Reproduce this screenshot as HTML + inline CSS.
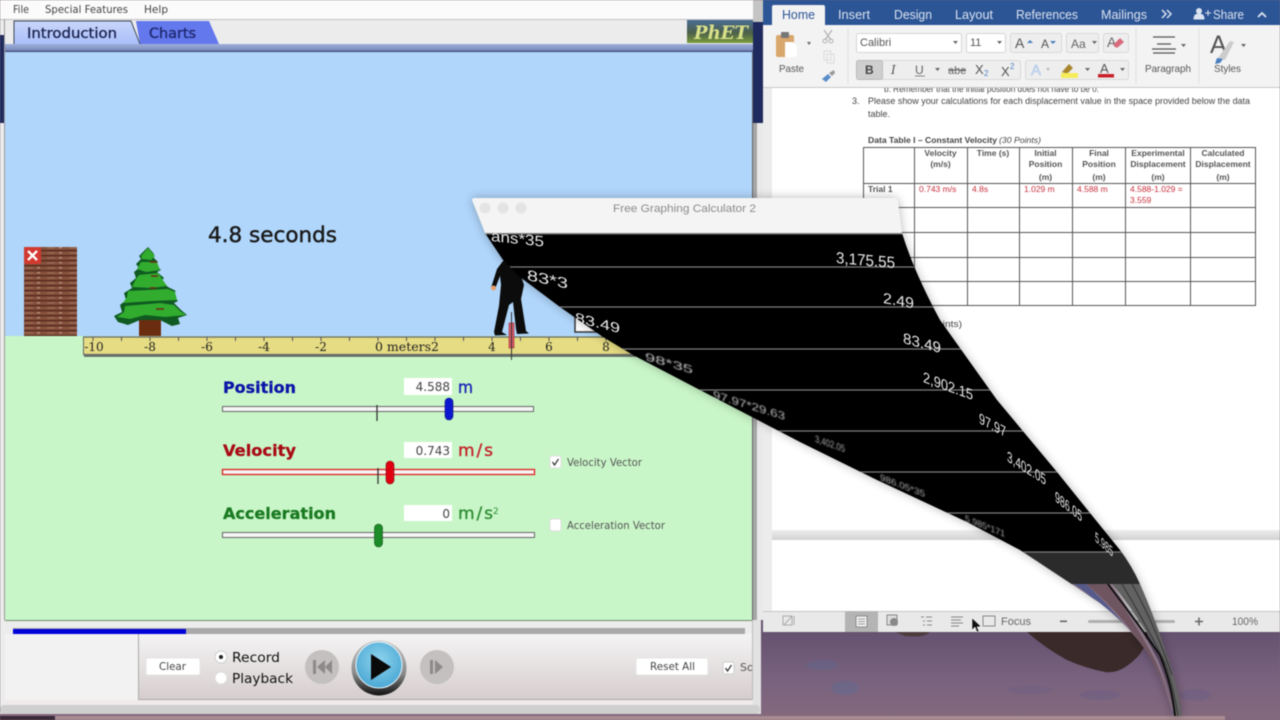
<!DOCTYPE html>
<html><head><meta charset="utf-8"><title>Screen</title>
<style>
html,body{margin:0;padding:0;width:1280px;height:720px;overflow:hidden;background:#7e6679}
svg{display:block;filter:blur(.45px)}
.d{font-family:"DejaVu Sans",sans-serif}
.l{font-family:"Liberation Sans",sans-serif}
.s{font-family:"DejaVu Serif",serif}
</style></head><body>
<svg width="1280" height="720" viewBox="0 0 1280 720" xmlns="http://www.w3.org/2000/svg">
<defs>
<linearGradient id="desk" gradientUnits="userSpaceOnUse" x1="0" y1="632" x2="0" y2="716"><stop offset="0" stop-color="#655270"/><stop offset=".55" stop-color="#78627e"/><stop offset="1" stop-color="#84697e"/></linearGradient>
<linearGradient id="panel" x1="0" y1="0" x2="0" y2="1"><stop offset="0" stop-color="#f4f4f4"/><stop offset="1" stop-color="#d6cdcd"/></linearGradient>
<linearGradient id="strip" x1="0" y1="0" x2="0" y2="1"><stop offset="0" stop-color="#9eb0dc"/><stop offset=".7" stop-color="#7f8fbf"/><stop offset="1" stop-color="#4b5a8c"/></linearGradient>
<linearGradient id="tab1" x1="0" y1="0" x2="0" y2="1"><stop offset="0" stop-color="#c8d6fa"/><stop offset="1" stop-color="#aabffa"/></linearGradient>
<linearGradient id="phet" x1="0" y1="0" x2="0" y2="1"><stop offset="0" stop-color="#4a6c96"/><stop offset=".55" stop-color="#4c5f4a"/><stop offset="1" stop-color="#7a9a3c"/></linearGradient>
<radialGradient id="playb" cx=".5" cy=".4" r=".6"><stop offset="0" stop-color="#8fd4ee"/><stop offset="1" stop-color="#4ba8d4"/></radialGradient>
<linearGradient id="playr" x1="0" y1="0" x2="0" y2="1"><stop offset="0" stop-color="#c8c8c8"/><stop offset=".6" stop-color="#8a8a8a"/><stop offset="1" stop-color="#111"/></linearGradient>
<linearGradient id="band" x1="0" y1="0" x2="0" y2="1"><stop offset="0" stop-color="#eeeeee"/><stop offset="1" stop-color="#d2d2d2"/></linearGradient>
<pattern id="brick" width="22" height="5" patternUnits="userSpaceOnUse"><rect width="22" height="5" fill="#85503c"/><rect y="0" width="22" height="1.300" fill="#55291c"/><rect x="3" y="2.300" width="8" height="1.200" fill="#9c6c54"/><rect x="15" y="2" width="3" height="1.500" fill="#b08a76"/></pattern>
<filter id="sh" x="-10%" y="-10%" width="120%" height="120%"><feGaussianBlur stdDeviation="5"/></filter>
<filter id="bl" x="-20%" y="-20%" width="140%" height="140%"><feGaussianBlur stdDeviation=".6"/></filter>
<clipPath id="docc"><rect x="772" y="88" width="508" height="442"/></clipPath>
<clipPath id="genie"><path id="gp" d="M472 200Q472 198 475 198L894 198Q897 198 898 201L902 233Q914 272 940 320L997 400L1057 472L1090 513L1120 550Q1132 566 1140 584Q1156 620 1172 670Q1180 696 1182 716L1173 716Q1168 690 1150 657Q1132 628 1100 603Q1085 593 1070 583L1020 550L967 522L877 480L800 442L700 390L633 355L603 337L560 307L520 277L503 260L485 233Z"/></clipPath>
</defs>

<!-- desktop -->
<rect width="1280" height="720" fill="url(#desk)"/>
<path d="M1027 632L1148 632Q1147 650 1132 662Q1118 674 1105 672Q1085 668 1067 660Q1045 648 1027 632Z" fill="#3a2a2a"/>
<path d="M895 632L930 632Q925 638 905 636Z" fill="#4d3c3e"/>
<ellipse cx="822" cy="665" rx="16" ry="5" fill="#5f6a92" opacity=".4"/><ellipse cx="845" cy="688" rx="14" ry="7" fill="#5f6a92" opacity=".45"/><ellipse cx="1100" cy="695" rx="20" ry="5" fill="#5f5a88" opacity=".3"/><ellipse cx="1195" cy="695" rx="16" ry="6" fill="#5f5a88" opacity=".3"/><ellipse cx="1030" cy="690" rx="22" ry="4" fill="#5f5a88" opacity=".25"/>
<rect x="55" y="716" width="1170" height="4" fill="#a88c92"/>
<rect x="0" y="716" width="55" height="4" fill="#3a2a38"/>

<!-- gutter between windows -->
<rect x="753" y="0" width="10" height="22" fill="#c4c4c4"/>
<rect x="753" y="22" width="10" height="101" fill="#1f2a5e"/>
<rect x="753" y="123" width="4" height="497" fill="#a6a6a6"/>
<rect x="757" y="123" width="6" height="497" fill="#e9e9e9"/>

<!-- WORD window -->
<rect x="763" y="0" width="517" height="632" fill="#ececec"/>

<!-- document -->
<rect x="772" y="88" width="508" height="442" fill="#fff"/>
<rect x="763" y="88" width="9" height="523" fill="#ececec"/>
<rect x="772" y="530" width="508" height="10" fill="url(#band)"/>
<rect x="772" y="540" width="508" height="71" fill="#fff"/>
<g class="l" fill="#444" font-size="9">
<g clip-path="url(#docc)"><text x="884" y="92" textLength="215" lengthAdjust="spacingAndGlyphs">b.   Remember that the initial position does not have to be 0.</text></g>
<text x="852" y="104">3.</text>
<text x="868" y="104" textLength="382" lengthAdjust="spacingAndGlyphs">Please show your calculations for each displacement value in the space provided below the data</text>
<text x="868" y="117" textLength="22" lengthAdjust="spacingAndGlyphs">table.</text>
<text x="868" y="143" font-weight="700" font-size="8.500" textLength="129" lengthAdjust="spacingAndGlyphs">Data Table I – Constant Velocity</text>
<text x="999" y="143" font-style="italic" font-size="8.500" textLength="42" lengthAdjust="spacingAndGlyphs">(30 Points)</text>
<text x="937" y="327" textLength="25" lengthAdjust="spacingAndGlyphs">oints)</text>
</g>
<g stroke="#555" stroke-width="1" fill="none">
<path d="M863.500 147.500H1255.500V305.500H863.500ZM863.500 183.500H1255.500M863.500 207.500H1255.500M863.500 232.500H1255.500M863.500 257.500H1255.500M863.500 281.500H1255.500M914.500 147.500V305.500M967.500 147.500V305.500M1019.500 147.500V305.500M1072.500 147.500V305.500M1125.500 147.500V305.500M1190.500 147.500V305.500"/>
</g>
<g class="l" fill="#555" font-size="8.500" font-weight="700" text-anchor="middle">
<text x="940.500" y="156">Velocity</text><text x="940.500" y="167">(m/s)</text>
<text x="993" y="156">Time (s)</text>
<text x="1045.500" y="156">Initial</text><text x="1045.500" y="167">Position</text><text x="1045.500" y="180">(m)</text>
<text x="1099" y="156">Final</text><text x="1099" y="167">Position</text><text x="1099" y="180">(m)</text>
<text x="1158" y="156">Experimental</text><text x="1158" y="167">Displacement</text><text x="1158" y="180">(m)</text>
<text x="1223" y="156">Calculated</text><text x="1223" y="167">Displacement</text><text x="1223" y="180">(m)</text>
</g>
<text class="l" x="868" y="192" font-size="8.500" font-weight="700" fill="#555">Trial 1</text>
<g class="l" fill="#c8303c" font-size="8.500">
<text x="919" y="192">0.743 m/s</text><text x="972" y="192">4.8s</text><text x="1024" y="192">1.029 m</text><text x="1077" y="192">4.588 m</text><text x="1130" y="192">4.588-1.029 =</text><text x="1130" y="203">3.559</text>
</g>

<rect x="763" y="0" width="517" height="25" fill="#2c5596"/>
<path d="M772 25V7Q772 5 774 5H823Q825 5 825 7V25Z" fill="#f3f3f3"/>
<rect x="763" y="25" width="517" height="62" fill="#f3f3f3"/>
<rect x="763" y="87" width="517" height="1" fill="#c8c8c8"/>
<g class="l" font-size="12.5" fill="#dbe3f0" font-weight="400">
<text x="782" y="19" fill="#2c5596" textLength="33" lengthAdjust="spacingAndGlyphs">Home</text>
<text x="838" y="19" textLength="32" lengthAdjust="spacingAndGlyphs">Insert</text>
<text x="894" y="19" textLength="38" lengthAdjust="spacingAndGlyphs">Design</text>
<text x="955" y="19" textLength="38" lengthAdjust="spacingAndGlyphs">Layout</text>
<text x="1016" y="19" textLength="62" lengthAdjust="spacingAndGlyphs">References</text>
<text x="1101" y="19" textLength="46" lengthAdjust="spacingAndGlyphs">Mailings</text>
<text x="1213" y="19" textLength="31" lengthAdjust="spacingAndGlyphs">Share</text>
</g>
<path d="M1162 10l4 4-4 4M1167 10l4 4-4 4" fill="none" stroke="#dbe3f0" stroke-width="1.5"/>
<path d="M1258 17l4-4 4 4" fill="none" stroke="#dbe3f0" stroke-width="1.8"/>
<circle cx="1199" cy="11" r="3" fill="#dbe3f0"/><path d="M1194 19q0-5 5-5t5 5zM1205 13h6M1208 10v6" fill="#dbe3f0" stroke="#dbe3f0"/>

<!-- clipboard -->
<rect x="776" y="35" width="18" height="22" rx="2" fill="#d9a66b"/>
<rect x="781" y="32" width="8" height="6" rx="1" fill="#777"/>
<path d="M785 42h8l4 4v11h-12z" fill="#fff"/>
<path d="M807 42h4l-2 3z" fill="#666"/>
<text class="l" x="779" y="72" font-size="10.5" fill="#555" textLength="25" lengthAdjust="spacingAndGlyphs">Paste</text>
<path d="M824 30l7 10M832 30l-7 10" stroke="#b4b4b4" stroke-width="1.3" fill="none"/><circle cx="825" cy="41" r="2" fill="none" stroke="#b4b4b4"/><circle cx="831" cy="41" r="2" fill="none" stroke="#b4b4b4"/>
<rect x="824" y="51" width="7" height="9" fill="none" stroke="#dcdcdc"/><rect x="827" y="54" width="7" height="9" fill="none" stroke="#dcdcdc"/>
<path d="M822 79l6-5 3 3-5 5z" fill="#5a8ec9"/><path d="M829 73l5-3 1 3-3 3z" fill="#999"/>
<line x1="848" y1="28" x2="848" y2="84" stroke="#e0e0e0"/>

<!-- font controls -->
<rect x="856.500" y="33.500" width="105" height="19" rx="2" fill="#fff" stroke="#d6d6d6"/>
<text class="l" x="860" y="46" font-size="11" fill="#555">Calibri</text>
<path d="M953 41h5l-2.500 3z" fill="#666"/>
<rect x="966.500" y="33.500" width="39" height="19" rx="2" fill="#fff" stroke="#d6d6d6"/>
<text class="l" x="970" y="46" font-size="11" fill="#555">11</text>
<path d="M997 41h5l-2.500 3z" fill="#666"/>
<rect x="1010.500" y="33.500" width="51" height="19" rx="2" fill="#eee" stroke="#d9d9d9"/>
<text class="l" x="1015" y="48" font-size="14" fill="#555">A</text><path d="M1027 43l3-3 3 3z" fill="#4a7fc0"/>
<text class="l" x="1041" y="48" font-size="12" fill="#555">A</text><path d="M1050 41l3 3 3-3z" fill="#4a7fc0"/>
<rect x="1066.500" y="33.500" width="32" height="19" rx="2" fill="#eee" stroke="#d9d9d9"/>
<text class="l" x="1071" y="48" font-size="12" fill="#666">Aa</text><path d="M1092 41h5l-2.500 3z" fill="#666"/>
<rect x="1103.500" y="33.500" width="25" height="19" rx="2" fill="#eee" stroke="#d9d9d9"/>
<text class="l" x="1107" y="47" font-size="14" fill="#666">A</text><path d="M1113 45l7-7 4 4-7 6z" fill="#d96a7b"/>

<rect x="856.500" y="60.500" width="164" height="19" rx="2" fill="#eee" stroke="#d9d9d9"/>
<rect x="856.500" y="60.500" width="26" height="19" rx="2" fill="#cfcfcf" stroke="#bbb"/>
<text class="l" x="865" y="74" font-size="12" font-weight="700" fill="#444">B</text>
<text class="s" x="891" y="74" font-size="12" font-style="italic" fill="#555">I</text>
<text class="l" x="915" y="74" font-size="12" fill="#666">U</text><line x1="915" y1="76" x2="925" y2="76" stroke="#888"/>
<path d="M935 68h5l-2.500 3z" fill="#666"/>
<text class="l" x="948" y="74" font-size="11" fill="#666">abe</text><line x1="948" y1="70" x2="966" y2="70" stroke="#666"/>
<text class="l" x="975" y="74" font-size="13" fill="#555">X</text><text class="l" x="984" y="76" font-size="8" fill="#4a7fc0">2</text>
<text class="l" x="1001" y="76" font-size="13" fill="#555">X</text><text class="l" x="1010" y="69" font-size="8" fill="#4a7fc0">2</text>
<rect x="1025.500" y="60.500" width="103" height="19" rx="2" fill="#eee" stroke="#d9d9d9"/>
<text class="l" x="1031" y="75" font-size="15" fill="#dce6f5" stroke="#a9c2e6" stroke-width=".6">A</text><path d="M1046 68h4l-2 3z" fill="#bbb"/>
<path d="M1062 72l7-8 4 4-6 6z" fill="#a8862e"/><rect x="1061" y="73" width="17" height="5" fill="#f6ec5a"/>
<path d="M1085 68h5l-2.500 3z" fill="#666"/>
<text class="l" x="1100" y="73" font-size="13" fill="#555">A</text><rect x="1098" y="74" width="16" height="3.500" fill="#c9202a"/>
<path d="M1120 68h5l-2.500 3z" fill="#666"/>
<line x1="1136" y1="28" x2="1136" y2="84" stroke="#e0e0e0"/>
<path d="M1153 37h22M1157 44h14M1152 49h24M1153 53h22" stroke="#555" stroke-width="1.3" fill="none"/>
<path d="M1181 44h5l-2.500 3z" fill="#666"/>
<text class="l" x="1145" y="72" font-size="10.500" fill="#555" textLength="46" lengthAdjust="spacingAndGlyphs">Paragraph</text>
<line x1="1199" y1="28" x2="1199" y2="84" stroke="#e0e0e0"/>
<text class="l" x="1210" y="53" font-size="25" fill="#555">A</text><path d="M1218 58l12-17 4 1-9 18z" fill="#ccc"/><path d="M1217 58l6 1-3 4-5 1z" fill="#4a7fc0"/>
<path d="M1241 44h5l-2.500 3z" fill="#666"/>
<text class="l" x="1214" y="72" font-size="10.500" fill="#555" textLength="27" lengthAdjust="spacingAndGlyphs">Styles</text>

<!-- status bar -->
<rect x="763" y="611" width="517" height="21" fill="#e9e9e9"/><rect x="763" y="611" width="517" height="1" fill="#c4c4c4"/>
<rect x="845" y="611" width="33" height="21" fill="#b4b4b4"/>
<rect x="856" y="616" width="11" height="11" fill="#f2f2f2" stroke="#8a8a8a"/><path d="M858 619h7M858 621.500h7M858 624h7" stroke="#9a9a9a"/>
<rect x="783" y="616" width="9" height="9" fill="none" stroke="#aaa"/><path d="M794 616v9M784 625l8-9" stroke="#aaa"/>
<rect x="887" y="615" width="10" height="10" fill="#ddd" stroke="#888"/><circle cx="894" cy="622" r="4" fill="#888"/>
<path d="M921 617h3M926 617h6M923 621h2M927 621h5M923 625h2M927 625h5" stroke="#888" fill="none"/>
<path d="M951 617h12M951 620h10M951 623h12M951 626h8" stroke="#888" fill="none"/>
<rect x="983" y="616" width="12" height="10" fill="none" stroke="#888"/>
<text class="l" x="1001" y="625" font-size="11" fill="#666" textLength="30" lengthAdjust="spacingAndGlyphs">Focus</text>
<rect x="1060" y="620.500" width="7" height="1.600" fill="#666"/>
<rect x="1088" y="620" width="87" height="3" rx="1.500" fill="#b0b0b0"/>
<path d="M1195 621.500h8M1199 617.500v8" stroke="#666" stroke-width="1.500"/>
<text class="l" x="1232" y="625" font-size="11" fill="#666" textLength="26" lengthAdjust="spacingAndGlyphs">100%</text>

<!-- PHET window -->
<rect x="753" y="620" width="8" height="94" fill="#e2e2e2"/>
<rect x="0" y="0" width="753" height="714" fill="#ececec"/>
<rect x="0" y="0" width="753" height="19" fill="#fbfbfb"/>
<rect x="0" y="19" width="753" height="1" fill="#c2c2c2"/>
<rect x="0" y="35" width="4" height="88" fill="#1f2a5e"/>
<rect x="4" y="19" width="1" height="601" fill="#9a9a9a"/>
<g class="d" font-size="11" fill="#444">
<text x="13" y="13" textLength="16" lengthAdjust="spacingAndGlyphs">File</text>
<text x="45" y="13" textLength="83" lengthAdjust="spacingAndGlyphs">Special Features</text>
<text x="144" y="13" textLength="24" lengthAdjust="spacingAndGlyphs">Help</text>
</g>
<rect x="5" y="44" width="748" height="8" fill="url(#strip)"/>
<rect x="5" y="51" width="748" height="1" fill="#3b4a7a"/>
<path d="M136 21H209L219 44H140Z" fill="#6478ee"/>
<path d="M14 44V21H131L140 44Z" fill="url(#tab1)"/>
<path d="M14 44V21H131L140 44" fill="none" stroke="#3d4558" stroke-width="1"/>
<text class="d" x="27" y="38" font-size="14" fill="#1e2550" stroke="#1e2550" stroke-width=".35" textLength="90" lengthAdjust="spacingAndGlyphs">Introduction</text>
<text class="d" x="149" y="38" font-size="14" fill="#1e2a70" stroke="#1e2a70" stroke-width=".35" textLength="47" lengthAdjust="spacingAndGlyphs">Charts</text>
<rect x="687" y="20" width="66" height="23" fill="url(#phet)"/>
<text class="s" x="694" y="39" font-size="19" font-style="italic" font-weight="700" fill="#d8e08a" textLength="54" lengthAdjust="spacingAndGlyphs">PhET</text>

<!-- stage -->
<rect x="5" y="52" width="748" height="284" fill="#b0d6fb"/>
<rect x="5" y="336" width="748" height="284" fill="#c9f6c8"/>
<rect x="5" y="620" width="748" height="1" fill="#6f8a6f"/>
<rect x="752" y="52" width="1" height="568" fill="#666"/>
<text class="d" x="208" y="242" font-size="21" fill="#1a1a1a" textLength="129" lengthAdjust="spacingAndGlyphs" stroke="#1a1a1a" stroke-width=".45">4.8 seconds</text>

<!-- wall -->
<rect x="24" y="247" width="53" height="89" fill="url(#brick)"/>
<rect x="24" y="247" width="17" height="17" rx="2" fill="#d23a30"/>
<path d="M28 251l9 9M37 251l-9 9" stroke="#fff" stroke-width="2.300"/>

<!-- tree -->
<rect x="139" y="318" width="22" height="18" fill="#6b2d10"/>
<path d="M148 247L154 254L152 256L158 262L155 264L161 270L157 272L164 278L161 281L168 287L176 291L171 294L178 301L174 303L181 310L187 315L178 318L180 324L172 326L160 320L140 320L128 325L118 322L114 316L122 312L120 305L126 300L124 293L132 288L130 283L136 278L134 272L139 268L136 264L141 259L139 256Z" fill="#0f5a20"/>
<path d="M148 248L155 256L151 260L142 259L141 256Z" fill="#32ac2e"/>
<path d="M141 262L157 262L160 270L146 272L137 269Z" fill="#32ac2e"/>
<path d="M139 275L158 273L167 286L152 288L132 287L136 279Z" fill="#32ac2e"/>
<path d="M128 291L168 289L175 292L177 300L152 301L123 303L127 297Z" fill="#32ac2e"/>
<path d="M125 306L160 303L174 305L180 311L186 315L165 317L145 315L130 319L117 317L124 312Z" fill="#32ac2e"/>
<path d="M150 262h7M151 276h7M150 288h6M156 309h8" stroke="#6b2d10" stroke-width="1.500" fill="none"/>

<!-- ruler -->
<rect x="83" y="337" width="557" height="17" fill="#e6dc83"/>
<path d="M83 337H640M83 354.500H640" stroke="#666" stroke-width="1.200"/>
<path d="M84 356H640" stroke="#555" stroke-width="1.500"/>
<line x1="83.500" y1="337" x2="83.500" y2="354" stroke="#666"/>
<path d="M93 337v4M121.500 337v4M150 337v4M178.500 337v4M207 337v4M235.500 337v4M264 337v4M292.500 337v4M321 337v4M349.500 337v4M378 337v4M406.500 337v4M435 337v4M463.500 337v4M492 337v4M520.500 337v4M549 337v4M577.500 337v4M606 337v4" stroke="#555" stroke-width="1" fill="none"/>
<g class="s" font-size="12" fill="#222" text-anchor="middle">
<text x="94" y="351">-10</text><text x="150" y="351">-8</text><text x="207" y="351">-6</text><text x="264" y="351">-4</text><text x="321" y="351">-2</text>
<text x="407" y="351" textLength="64" lengthAdjust="spacingAndGlyphs">0 meters2</text>
<text x="492" y="351">4</text><text x="549" y="351">6</text><text x="606" y="351">8</text>
</g>

<!-- man -->
<path d="M503 261L515 258L524 285L521 299L526 331L529 333.500L517 334L516 329L513 302L509 305L502 332L507 335L495 335.500L494 332L499 306L501 285L500 276L495 289L491 288L497 269Z" fill="#0c0c0c"/>
<circle cx="493.500" cy="288" r="2.500" fill="#e8a070"/>
<rect x="509" y="323" width="5" height="25" fill="#d85a6a" stroke="#a03030" stroke-width=".6"/>
<line x1="511.500" y1="312" x2="511.500" y2="360" stroke="#333" stroke-width="1"/>
<path d="M575 327V316L600 332H575Z" fill="#fff" stroke="#333" stroke-width="1.500"/>

<!-- controls -->
<g class="d" font-size="16" font-weight="700">
<text x="223" y="393" fill="#0a14a8" stroke="#0a14a8" stroke-width=".3" textLength="73" lengthAdjust="spacingAndGlyphs">Position</text>
<text x="223" y="456" fill="#a80a14" stroke="#a80a14" stroke-width=".3" textLength="73" lengthAdjust="spacingAndGlyphs">Velocity</text>
<text x="223" y="519" fill="#1a7a22" stroke="#1a7a22" stroke-width=".3" textLength="113" lengthAdjust="spacingAndGlyphs">Acceleration</text>
</g>
<rect x="404" y="378" width="48" height="17" fill="#fff"/><rect x="404" y="442" width="48" height="16" fill="#fff"/><rect x="404" y="505" width="48" height="16" fill="#fff"/>
<g class="d" font-size="12" fill="#444" text-anchor="end"><text x="450" y="391">4.588</text><text x="450" y="455">0.743</text><text x="450" y="518">0</text></g>
<g class="d" font-size="17">
<text x="458" y="393" fill="#1a22b8" stroke="#1a22b8" stroke-width=".35" textLength="15" lengthAdjust="spacingAndGlyphs">m</text>
<text x="458" y="456" fill="#c4202a" stroke="#c4202a" stroke-width=".35" textLength="35" lengthAdjust="spacing">m/s</text>
<text x="458" y="519" fill="#2e8c34" stroke="#2e8c34" stroke-width=".35" textLength="35" lengthAdjust="spacing">m/s</text>
<text x="493" y="514" font-size="9" fill="#2e8c34">2</text>
</g>
<rect x="222.500" y="406.500" width="311" height="5" fill="#f5f5f5" stroke="#666"/>
<line x1="377" y1="405" x2="377" y2="421" stroke="#333" stroke-width="1.300"/>
<rect x="445" y="398" width="8" height="22" rx="4" fill="#0c18d0" stroke="#0a1070" stroke-width=".6"/>
<rect x="222.500" y="469.500" width="312" height="5" fill="#f5f5f5" stroke="#d22" stroke-width="1.300"/>
<line x1="378" y1="468" x2="378" y2="484" stroke="#333" stroke-width="1.300"/>
<rect x="386" y="461" width="8" height="23" rx="4" fill="#e00010" stroke="#801010" stroke-width=".6"/>
<rect x="222.500" y="532.500" width="312" height="5" fill="#f5f5f5" stroke="#666"/>
<rect x="374.500" y="524" width="8" height="23" rx="4" fill="#1c8c28" stroke="#0e4c14" stroke-width=".6"/>
<rect x="550" y="456" width="11" height="12" rx="2" fill="#fff" stroke="#ddd"/>
<path d="M552.500 462l2 3 4-6" fill="none" stroke="#333" stroke-width="1.200"/>
<rect x="550" y="519" width="11" height="12" rx="2" fill="#fff" stroke="#ddd"/>
<g class="d" font-size="11" fill="#555">
<text x="567" y="466" textLength="75" lengthAdjust="spacingAndGlyphs">Velocity Vector</text>
<text x="567" y="529" textLength="98" lengthAdjust="spacingAndGlyphs">Acceleration Vector</text>
</g>

<!-- bottom bar -->
<rect x="13" y="628" width="732" height="6" fill="#a9a9a9"/>
<rect x="13" y="629" width="173" height="5" fill="#0000d8"/>
<rect x="5" y="634" width="133" height="66" fill="#f2f2f2"/>
<rect x="138" y="634" width="615" height="66" fill="url(#panel)"/>
<line x1="138.500" y1="634" x2="138.500" y2="700" stroke="#aaa"/><line x1="138" y1="699.500" x2="753" y2="699.500" stroke="#aaa"/>
<rect x="5" y="700" width="748" height="5" fill="#f0eaea"/>
<rect x="0" y="705" width="760" height="9" rx="4" fill="#cfcfcf"/>
<rect x="146" y="658" width="54" height="17" rx="2" fill="#fff" stroke="#e4e4e4"/>
<text class="d" x="159" y="670" font-size="11" fill="#444" textLength="27" lengthAdjust="spacingAndGlyphs">Clear</text>
<circle cx="221" cy="657" r="6" fill="#fff" stroke="#ccc"/><circle cx="221" cy="657" r="2" fill="#222"/>
<circle cx="221" cy="678" r="6" fill="#fff" stroke="#ddd"/>
<g class="d" font-size="13" fill="#111">
<text x="232" y="662" textLength="48" lengthAdjust="spacingAndGlyphs">Record</text>
<text x="232" y="683" textLength="61" lengthAdjust="spacingAndGlyphs">Playback</text>
</g>
<circle cx="322" cy="667" r="17" fill="#c4c0c0"/>
<path d="M313 660h3v14h-3zM325 660v14l-8-7zM332 660v14l-7-7z" fill="#8e8a8a"/>
<circle cx="379" cy="668" r="27.500" fill="url(#playr)"/>
<circle cx="379" cy="665" r="23" fill="url(#playb)" stroke="#e4f2f8" stroke-width="1"/>
<path d="M371 654L391 667L371 680Z" fill="#0a0a0a"/>
<circle cx="437" cy="667" r="17" fill="#c4c0c0"/>
<path d="M430 660h3v14h-3zM435 660v14l8-7z" fill="#8e8a8a"/>
<rect x="636" y="658" width="72" height="17" rx="2" fill="#fff" stroke="#e4e4e4"/>
<text class="d" x="650" y="670" font-size="11" fill="#444" textLength="45" lengthAdjust="spacingAndGlyphs">Reset All</text>
<rect x="723" y="662" width="11" height="12" rx="2" fill="#fff" stroke="#ccc"/>
<path d="M725.500 668l2 3 4-6" fill="none" stroke="#333" stroke-width="1.200"/>
<text class="d" x="740" y="671" font-size="11" fill="#555">So</text>
<rect x="752" y="620" width="1" height="80" fill="#bbb"/>

<!-- genie shadow -->
<use href="#gp" fill="#000" opacity=".28" filter="url(#sh)"/>

<!-- genie window -->
<g clip-path="url(#genie)">
<rect x="460" y="190" width="730" height="44" fill="#f4f4f4"/>
<rect x="460" y="233" width="730" height="1.500" fill="#777"/>
<rect x="460" y="234.500" width="730" height="318" fill="#000"/>
<rect x="460" y="552" width="730" height="32" fill="#2b2b2b"/>
<g stroke="#7c7c7c" stroke-width="1.200">
<line x1="460" y1="267" x2="1190" y2="267"/><line x1="460" y1="307" x2="1190" y2="307"/><line x1="460" y1="349" x2="1190" y2="349"/><line x1="460" y1="390" x2="1190" y2="390"/><line x1="460" y1="431" x2="1190" y2="431"/><line x1="460" y1="472" x2="1190" y2="472"/><line x1="460" y1="513" x2="1190" y2="513"/><line x1="460" y1="552" x2="1190" y2="552"/>
</g>
<circle cx="485" cy="208" r="5.500" fill="#e4e4e4"/><circle cx="503" cy="208" r="5.500" fill="#e4e4e4"/><circle cx="521" cy="208" r="5.500" fill="#e4e4e4"/>
<text class="l" x="613" y="212" font-size="11" fill="#8a8a8a" textLength="143" lengthAdjust="spacingAndGlyphs">Free Graphing Calculator 2</text>
<!-- strip -->
<path d="M1060 584H1112Q1140 625 1158 660Q1170 690 1174 716H1173Q1160 680 1130 632Q1105 604 1060 584Z" fill="#8b7688"/>
<path d="M1074 584H1086Q1125 620 1150 660Q1168 695 1174 716Q1155 680 1125 637Q1105 605 1074 584Z" fill="#565a8a"/>
<path d="M1086 584H1108Q1135 622 1155 660Q1170 695 1175 716Q1165 680 1145 650Q1120 612 1086 584Z" fill="#6e5560"/>
<path d="M1112 584H1142Q1160 625 1172 670Q1180 696 1182 716H1176Q1170 680 1158 652Q1138 615 1112 584Z" fill="#626262"/>
<path d="M1108 584Q1133 617 1160 655Q1172 685 1175 716" fill="none" stroke="#0a0a0a" stroke-width="1.800"/>
<path d="M1122 584Q1145 622 1166 665Q1175 695 1178 716M1132 584Q1155 625 1172 675" fill="none" stroke="#333" stroke-width="1"/>
</g>
<g clip-path="url(#genie)" class="l" fill="#e8e8e8">
<text x="0" y="0" font-size="16" transform="translate(836,263) skewY(5)" textLength="59" lengthAdjust="spacingAndGlyphs">3,175.55</text>
<text x="0" y="0" font-size="15" transform="translate(883,303) skewY(10)" textLength="31" lengthAdjust="spacingAndGlyphs">2.49</text>
<text x="0" y="0" font-size="15" transform="translate(903,343) skewY(15)" textLength="38" lengthAdjust="spacingAndGlyphs">83.49</text>
<text x="0" y="0" font-size="15" transform="translate(923,382) skewY(20)" textLength="50" lengthAdjust="spacingAndGlyphs">2,902.15</text>
<text x="0" y="0" font-size="15" transform="translate(979,423) skewY(28)" textLength="27" lengthAdjust="spacingAndGlyphs">97.97</text>
<text x="0" y="0" font-size="15" transform="translate(1007,461) skewY(32)" textLength="39" lengthAdjust="spacingAndGlyphs">3,402.05</text>
<text x="0" y="0" font-size="15" transform="translate(1055,501) skewY(38)" textLength="27" lengthAdjust="spacingAndGlyphs">986.05</text>
<text x="0" y="0" font-size="14" transform="translate(1095,541) skewY(42)" textLength="18" lengthAdjust="spacingAndGlyphs">5.985</text>
<text x="0" y="0" font-size="15" transform="translate(491,241) skewY(6)" textLength="53" lengthAdjust="spacingAndGlyphs">ans*35</text>
<text x="0" y="0" font-size="15" transform="translate(527,280) skewY(12)" textLength="41" lengthAdjust="spacingAndGlyphs">83*3</text>
<text x="0" y="0" font-size="14" transform="translate(575,322) skewY(14)" textLength="45" lengthAdjust="spacingAndGlyphs">83.49</text>
<g filter="url(#bl)">
<text x="0" y="0" font-size="11" transform="translate(645,360) skewY(16)" textLength="48" lengthAdjust="spacingAndGlyphs" fill="#c4c4c4">98*35</text>
<text x="0" y="0" font-size="11" transform="translate(713,398) skewY(17)" textLength="72" lengthAdjust="spacingAndGlyphs" fill="#bbb">97.97*29.63</text>
<text x="0" y="0" font-size="10" transform="translate(815,442) skewY(19)" textLength="30" lengthAdjust="spacingAndGlyphs" fill="#aaa">3,402.05</text>
<text x="0" y="0" font-size="9" transform="translate(880,480) skewY(21)" textLength="45" lengthAdjust="spacingAndGlyphs" fill="#aaa">986.05*35</text>
<text x="0" y="0" font-size="9" transform="translate(965,521) skewY(22)" textLength="40" lengthAdjust="spacingAndGlyphs" fill="#aaa">5.985*171</text>
</g>
</g>

<!-- cursor -->
<path d="M972 618v12l3-3 2 5 2-1-2-4 4-.5z" fill="#111" stroke="#fff" stroke-width=".5"/>
</svg>
</body></html>
